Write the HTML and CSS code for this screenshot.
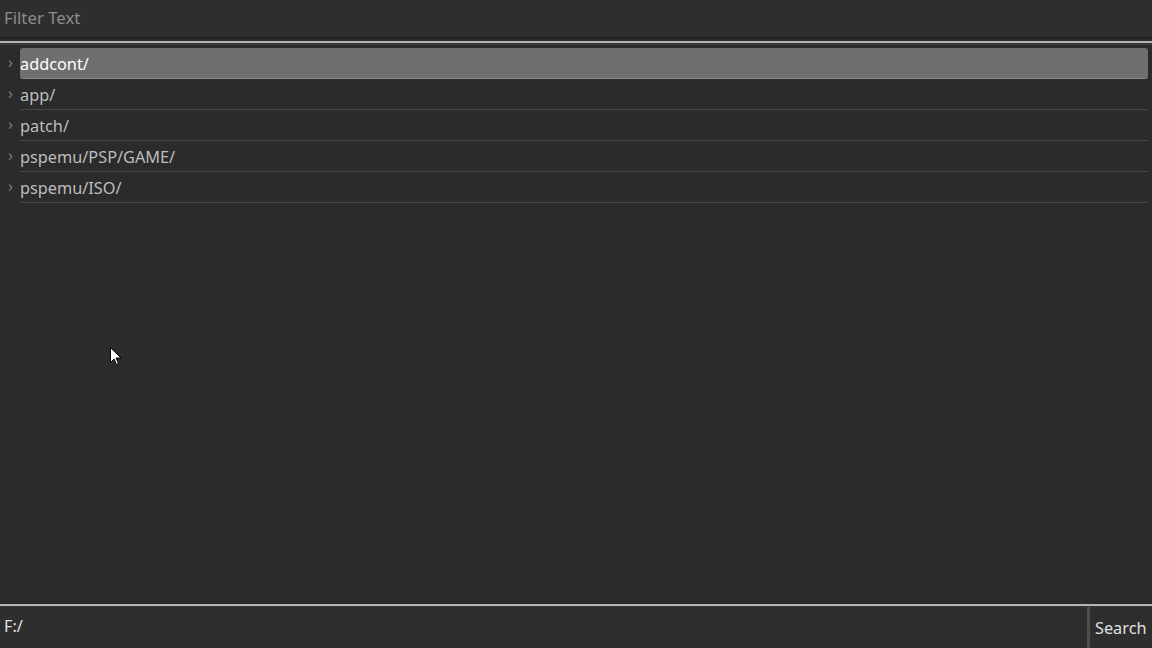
FILE: index.html
```html
<!DOCTYPE html>
<html>
<head>
<meta charset="utf-8">
<link rel="stylesheet" href="styles.css">
</head>
<body>
<div class="app">
  <div class="filter">Filter Text</div>
  <div class="divider"></div>
  <div class="list">
    <div class="row selected"><span class="chev">›</span><span class="label">addcont/</span></div>
    <div class="row"><span class="chev">›</span><span class="label">app/</span></div>
    <div class="row"><span class="chev">›</span><span class="label">patch/</span></div>
    <div class="row"><span class="chev">›</span><span class="label">pspemu/PSP/GAME/</span></div>
    <div class="row"><span class="chev">›</span><span class="label">pspemu/ISO/</span></div>
  </div>
  <div class="divider bottom"></div>
  <div class="footer">
    <div class="path">F:/</div>
    <div class="vsep"></div>
    <div class="btn">Search</div>
  </div>
</div>
<svg class="cursor" width="12" height="19" viewBox="0 0 12 19"><path d="M0.5 0.5 L0.5 15.5 L4 12 L6.5 17.5 L8.5 16.5 L6 11 L11 11 Z" fill="#fff" stroke="#000" stroke-width="1"/></svg>
</body>
</html>
```
FILE: styles.css
```css
html, body { margin: 0; padding: 0; }
body {
  width: 1152px; height: 648px; overflow: hidden;
  background: #2b2b2b;
  font-family: "Noto Sans", "Open Sans", sans-serif;
  position: relative;
}
.app { display: flex; flex-direction: column; height: 648px; }
.filter {
  height: 39px; box-sizing: border-box;
  padding: 6px 0 0 4px;
  background: #2e2e2e;
  color: #8c8c8c; font-size: 16.8px;
  border-bottom: 2px solid #242424;
  border-radius: 0 0 4px 4px;
}
.divider {
  height: 2px; background: #b4b4b4;
  margin-top: 2px;
  border-bottom: 2px solid #3a3a3a;
}
.list { flex: 1; padding-top: 3px; }
.row {
  display: flex; align-items: center;
  height: 31px; box-sizing: border-box;
}
.chev {
  width: 20px; box-sizing: border-box; padding-left: 8px;
  color: #808080; font-size: 16px; line-height: 1; margin-top: -4px;
}
.label {
  flex: 1; margin-right: 4px; height: 31px; box-sizing: border-box;
  padding-top: 1px;
  border-bottom: 1px solid #474747;
  color: #bdbdbd; font-size: 16.3px; line-height: 30px;
}
.row.selected .label {
  background: #6f6f6f; color: #ffffff;
  border-radius: 3px; border-bottom: 1px solid #8a8a8a;
}
.divider.bottom { margin-top: 0; border-bottom: 1px solid #3a3a3a; }
.footer { display: flex; height: 41px; }
.path {
  flex: 1; background: #2e2e2e; color: #e0e0e0; font-size: 16.3px;
  padding: 8px 0 0 4px; box-sizing: border-box;
  border-radius: 0 0 4px 4px;
}
.vsep { width: 3px; background: #4e4e4e; }
.btn {
  width: 62px; color: #e0e0e0; font-size: 16.3px;
  padding: 10px 0 0 5px; box-sizing: border-box;
  background: #2e2e2e;
}
.cursor { position: absolute; left: 110px; top: 347px; }
```
